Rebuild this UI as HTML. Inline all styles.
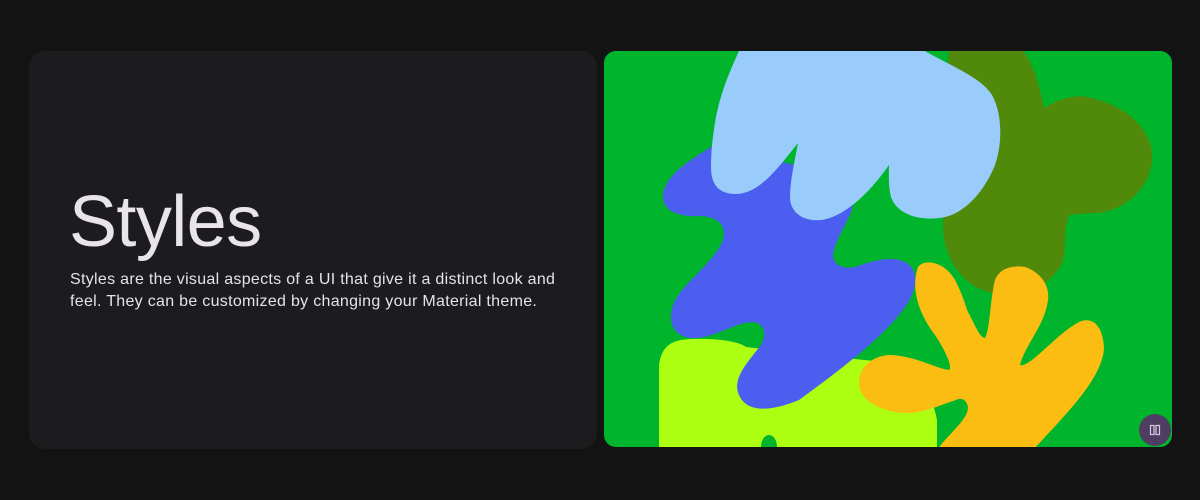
<!DOCTYPE html>
<html><head><meta charset="utf-8"><style>
html,body{margin:0;padding:0;background:#131313;width:1200px;height:500px;overflow:hidden}
.l{position:absolute;left:29px;top:51px;width:568px;height:398px;background:#1c1c1e;border-radius:16px}
h1{position:absolute;left:40px;top:135px;margin:0;font:400 72px/1 "Liberation Sans",sans-serif;color:#e8e4ea;letter-spacing:-0.6px}
p{position:absolute;left:41px;top:218px;width:520px;margin:0;font:400 16px/22px "Liberation Sans",sans-serif;color:#e6e2e8;letter-spacing:0.3px}
svg{position:absolute;left:0;top:0}
</style></head><body>
<div class="l"><h1>Styles</h1><p>Styles are the visual aspects of a UI that give it a distinct look and<br>feel. They can be customized by changing your Material theme.</p></div>
<svg width="1200" height="500" viewBox="0 0 1200 500">
<defs><clipPath id="c"><rect x="604" y="51" width="568" height="396" rx="12"/></clipPath></defs>
<g clip-path="url(#c)">
<rect x="604" y="51" width="568" height="396" fill="#00b52c"/>
<path fill="#518a0a" d="M949,40 L1014,40 C1035,60 1040,90 1044,108 C1060,98 1075,95 1087,97 C1130,105 1155,135 1152,160 C1150,190 1120,215 1090,213 L1069,215 C1062,235 1068,255 1060,267 C1045,290 1020,298 991,293 C960,285 943,255 943,227 Z"/>
<path fill="#adff12" d="M659,470 L659,365 C662,345 672,340 690,339 C720,338 740,342 746,347 L864,360 C900,362 930,380 937,420 L937,470 Z"/>
<ellipse cx="769" cy="447" rx="8" ry="12" fill="#00b52c"/>
<path fill="#4b5ef0" d="M711,147 C690,160 665,175 663,195 C662,212 680,217 700,216 C718,217 727,225 723,240 C715,262 680,285 673,305 C668,322 672,335 690,338 C715,340 740,318 757,323 C768,328 764,340 761,345 C748,362 730,380 740,397 C748,412 770,412 799,400 C840,370 880,340 903,310 C918,290 920,270 905,262 C890,255 870,262 855,267 C840,270 830,262 834,250 C840,230 853,215 853,203 L820,170 Z"/>
<path fill="#99ccfa" d="M744,40 L906,40 C940,62 980,75 992,95 C1003,115 1002,145 995,165 C985,190 965,215 940,218 C915,221 896,212 891,197 C888,185 889,172 889,165 C875,185 850,215 822,220 C800,222 790,210 790,197 C790,180 795,160 798,143 C780,165 760,195 734,194 C715,193 711,180 711,167 C711,150 713,135 715,123 C720,90 735,60 744,40 Z"/>
<path fill="#fbbd12" d="M859,383 C859,365 875,355 891,355 C915,356 935,368 949,370 C953,367 945,350 935,335 C920,315 910,290 918,267 C925,258 945,262 955,280 C963,295 965,305 968,312 C975,325 980,338 985,338 C990,330 990,300 995,280 C1000,268 1012,265 1025,267 C1040,272 1050,285 1048,300 C1045,325 1025,345 1020,365 C1030,368 1055,335 1079,322 C1095,315 1104,330 1104,350 C1100,380 1070,410 1033,450 L937,450 C950,432 968,420 968,407 C966,398 960,398 956,400 C940,405 925,413 906,413 C880,412 859,400 859,383 Z"/>
<circle cx="1155" cy="430" r="16" fill="#4f3d62"/>
<rect x="1150.5" y="425.5" width="3.5" height="9" fill="none" stroke="#d8cde0" stroke-width="1.2"/>
<rect x="1156" y="425.5" width="3.5" height="9" fill="none" stroke="#d8cde0" stroke-width="1.2"/>
</g>
</svg>
</body></html>
